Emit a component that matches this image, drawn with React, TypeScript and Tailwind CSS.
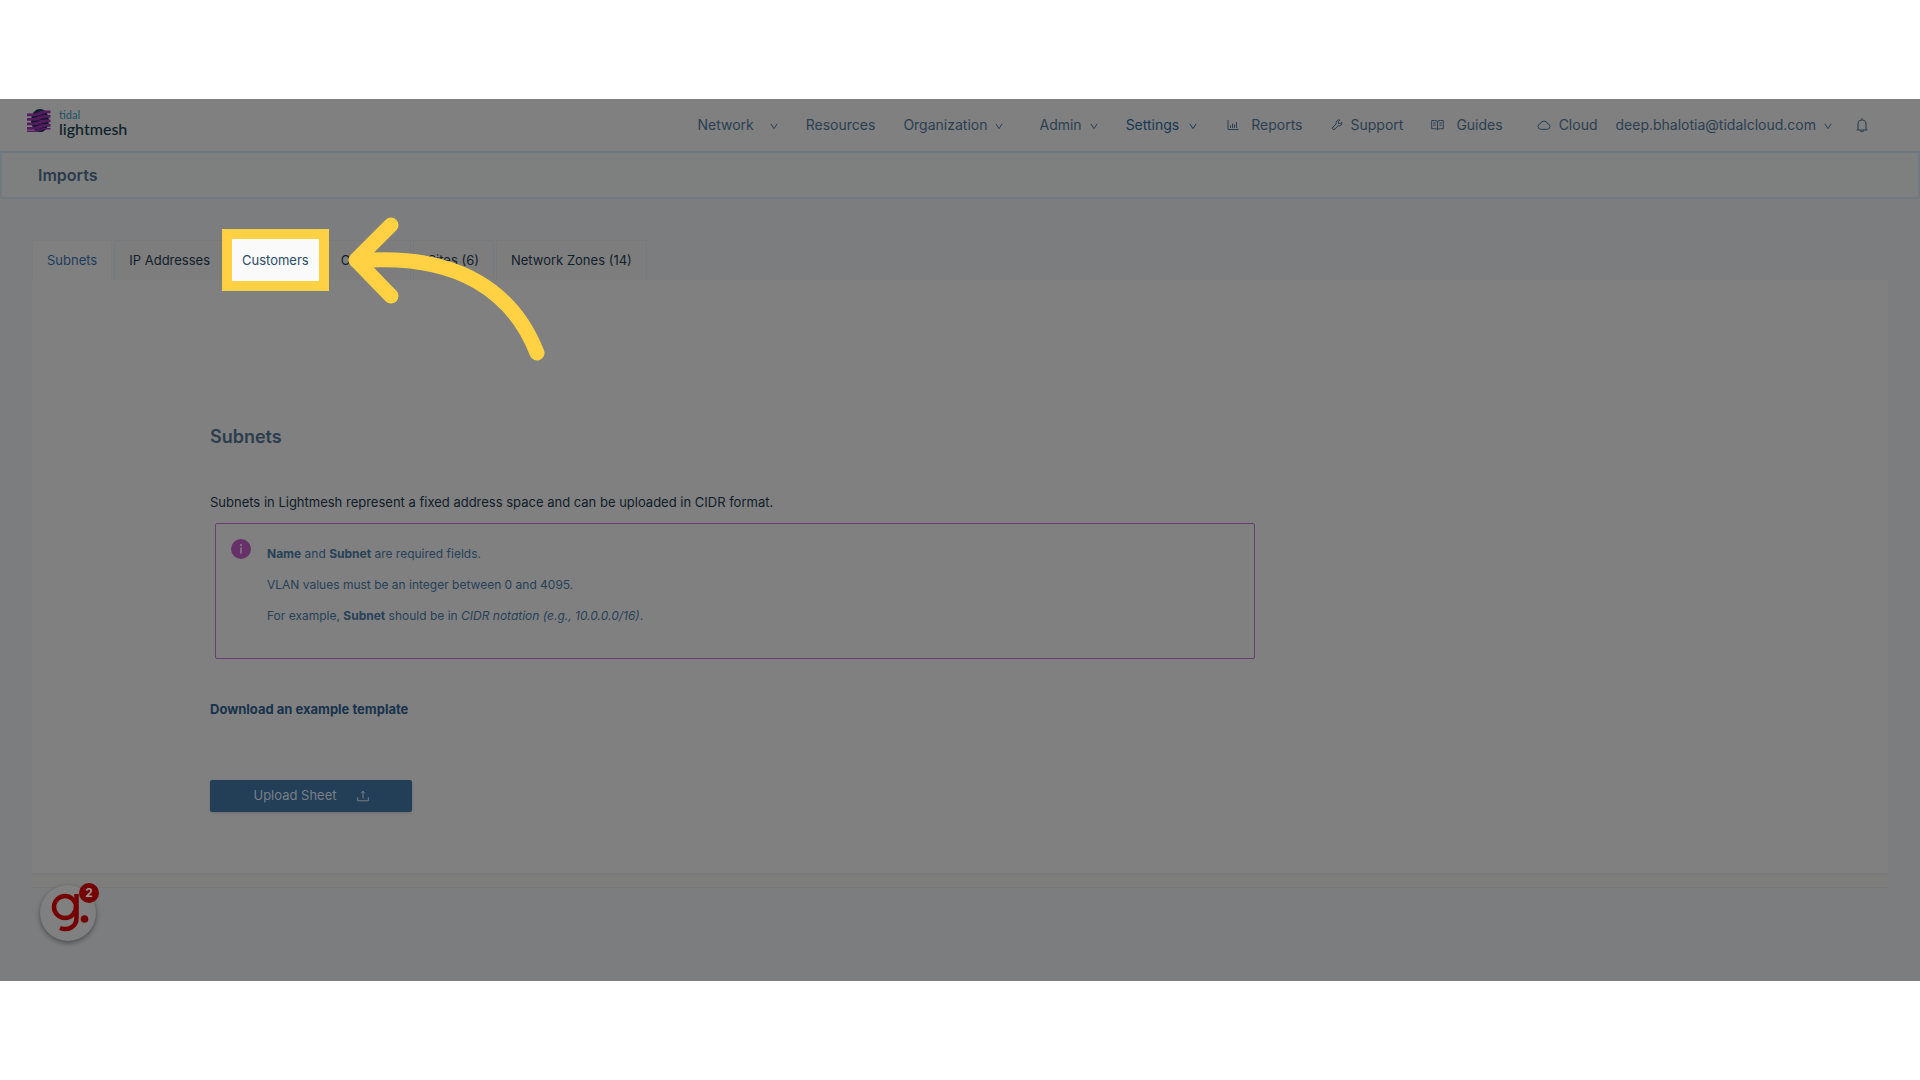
import type { ReactNode } from 'react';
import clsx from 'clsx';

type NavItem = {
  label: string;
  className: string;
  icon?: ReactNode;
  menu?: boolean;
};

const Chevron = () => (
  <svg className="w-2 h-2 shrink-0 mt-[2px]" viewBox="0 0 8 8" fill="none" stroke="currentColor" strokeWidth="1">
    <path d="M0.8 1.8 4 6.6 7.2 1.8" />
  </svg>
);

const ChartIcon = () => (
  <svg className="w-3 h-3 shrink-0" viewBox="0 0 12 12" fill="none" stroke="currentColor" strokeWidth="1">
    <path d="M1 1v9.5h10.5" />
    <path d="M3.5 6.5V9M5.5 4.5V9M7.5 5.5V9M9.5 3V9" />
  </svg>
);

const WrenchIcon = () => (
  <svg className="w-3 h-3 shrink-0" viewBox="0 0 12 12" fill="none" stroke="currentColor" strokeWidth="1" strokeLinejoin="round">
    <path d="M8.9 1.1a2.9 2.9 0 0 0-3.7 3.7L1 9.1 2.9 11l4.2-4.2a2.9 2.9 0 0 0 3.7-3.7L9.2 4.7 7.5 4.5 7.3 2.8z" />
    <path d="M2.7 8.6l.8.8" />
  </svg>
);

const BookIcon = () => (
  <svg className="w-[13px] h-3 shrink-0" viewBox="0 0 13 12" fill="none" stroke="currentColor" strokeWidth="1">
    <path d="M6.5 2.3C5.6 1.7 4.6 1.5 3.4 1.5H.7v8.2h3c1.2 0 2 .2 2.8.8.8-.6 1.6-.8 2.8-.8h3V1.5H9.6c-1.2 0-2.2.2-3.1.8zM6.5 2.3v8.2" />
    <path d="M2.2 4h2.5M2.2 6.2h2.5M8.3 4h2.5M8.3 6.2h2.5" />
  </svg>
);

const CloudIcon = () => (
  <svg className="w-3.5 h-3 shrink-0" viewBox="0 0 14 12" fill="none" stroke="currentColor" strokeWidth="1">
    <path d="M3.5 10.3a2.8 2.8 0 0 1-.3-5.5 4 4 0 0 1 7.6 0 2.8 2.8 0 0 1-.3 5.5z" />
  </svg>
);

const BellIcon = () => (
  <svg className="w-3 h-[15px]" viewBox="0 0 12 15" fill="none" stroke="currentColor" strokeWidth="1.1">
    <path d="M0.5 12h11M2 12V6a4 4 0 0 1 8 0v6M6 2V.3M4.5 12.2a1.5 1.5 0 0 0 3 0" />
  </svg>
);

const UploadIcon = () => (
  <svg className="w-3 h-3" viewBox="0 0 12 12" fill="none" stroke="currentColor" strokeWidth="1">
    <path d="M.7 7.2v3.6h10.6V7.2M6 8.4V1.4M4.2 3.2 6 1.2l1.8 2" />
  </svg>
);

const navItems: NavItem[] = [
  { label: 'Network', className: 'gap-4', menu: true },
  { label: 'Resources', className: 'ml-7' },
  { label: 'Organization', className: 'ml-7 gap-2', menu: true },
  { label: 'Admin', className: 'ml-9 gap-2', menu: true },
  { label: 'Settings', className: 'ml-7 gap-[10px] text-[#173753]', menu: true },
  { label: 'Reports', className: 'ml-[30px] gap-3', icon: <ChartIcon /> },
  { label: 'Support', className: 'ml-7 gap-2', icon: <WrenchIcon /> },
  { label: 'Guides', className: 'ml-7 gap-3', icon: <BookIcon /> },
  { label: 'Cloud', className: 'ml-[34px] gap-2', icon: <CloudIcon /> },
  { label: 'deep.bhalotia@tidalcloud.com', className: 'ml-[18px] gap-2', menu: true },
];

const tabs = ['Subnets', 'IP Addresses', 'Customers', 'Contacts', 'Sites (6)', 'Network Zones (14)'];

function Logo() {
  return (
    <a href="#" className="flex items-start gap-2">
      <svg className="w-6 h-6" viewBox="0 0 24 24">
        <ellipse cx="13" cy="11.500" rx="9" ry="11.500" fill="#0b1c2b" />
        <g fill="#561a60">
          <path d="M0 4.500H6C11 4.500 12 1.500 17 1.500H23.500V4.200H19C14 4.200 13 7.200 8 7.200H0z" />
          <path d="M0 9H6C11 9 12 6 17 6H23.500V8.700H19C14 8.700 13 11.700 8 11.700H0z" />
          <path d="M0 13.500H6C11 13.500 12 10.500 17 10.500H23.500V13.200H19C14 13.200 13 16.200 8 16.200H0z" />
          <path d="M0 18H6C11 18 12 15 17 15H23.500V17.700H19C14 17.700 13 20.700 8 20.700H0z" />
          <path d="M0 21.500H6C11 21.500 13 19 18 19H23.500V20.500H19C14 20.500 12 23 8 23H0z" />
        </g>
      </svg>
      <span className="flex flex-col font-['Lato',sans-serif]">
        <span className="text-[11px] leading-3 text-[#1b5165]">tidal</span>
        <span className="text-base leading-4 font-medium text-[#0b2028]">lightmesh</span>
      </span>
    </a>
  );
}

function Header() {
  return (
    <header className="flex items-start justify-between h-[52px] pt-[10px] pl-[27px] pr-[52px]">
      <Logo />
      <nav className="flex items-center pt-[6px] text-sm leading-5 text-[#2b3f52]">
        {navItems.map((item) => (
          <a key={item.label} href="#" className={clsx('flex items-center', item.className)}>
            {item.icon}
            {item.label}
            {item.menu && <Chevron />}
          </a>
        ))}
        <button aria-label="Notifications" className="ml-6">
          <BellIcon />
        </button>
      </nav>
    </header>
  );
}

// Yellow frame and arrow pointing at the highlighted tab
function Highlight() {
  return (
    <>
      <span className="absolute z-10 -top-3 -bottom-[11px] -inset-x-[6px] border-10 border-[#ffd143] pointer-events-none" />
      <svg
        className="absolute z-10 left-[115px] -top-[29px] w-[208px] h-[152px] pointer-events-none"
        viewBox="0 0 208 152"
        fill="none"
        stroke="#ffd143"
        strokeWidth="15"
        strokeLinecap="round"
        strokeLinejoin="round"
      >
        <path d="M194 141C171 82 117 40 14 49" />
        <path d="M48 13 13 48 48 84" />
      </svg>
    </>
  );
}

function Tabs() {
  return (
    <div role="tablist" className="flex gap-[2px] text-[13px] leading-5">
      {tabs.map((tab) => (
        <button
          key={tab}
          role="tab"
          aria-selected={tab === 'Subnets'}
          className={clsx(
            'relative h-10 px-[14px] pb-[2px] border border-b-0',
            tab === 'Subnets' && 'bg-[#808080] border-[#7a7c7e] text-[#1c3d5c]',
            tab === 'Customers' && 'bg-[#fafafa] border-[#fafafa] text-[#2b4a66] ring-2 ring-[#fafafa]',
            tab !== 'Subnets' && tab !== 'Customers' && 'bg-[#7d7d7d] border-[#77797b] text-[#111e2b]'
          )}
        >
          {tab}
          {tab === 'Customers' && <Highlight />}
        </button>
      ))}
    </div>
  );
}

function InfoBox() {
  return (
    <div className="flex items-start gap-4 ml-[5px] mt-[11px] w-[1040px] h-[136px] max-w-full border border-[#684070] rounded-xs pl-[15px] pt-[15px]">
      <svg className="w-5 h-5 shrink-0" viewBox="0 0 20 20">
        <circle cx="10" cy="10" r="10" fill="#663169" />
        <path d="M10 8.500v6" stroke="#908591" strokeWidth="1.400" />
        <circle cx="10" cy="6" r="1" fill="#908591" />
      </svg>
      <div className="flex flex-col gap-[11px] pt-[5px] text-xs leading-5 text-[#264158]">
        <p><strong>Name</strong> and <strong>Subnet</strong> are required fields.</p>
        <p>VLAN values must be an integer between 0 and 4095.</p>
        <p>For example, <strong>Subnet</strong> should be in <em>CIDR notation (e.g., 10.0.0.0/16)</em>.</p>
      </div>
    </div>
  );
}

function ChatLauncher() {
  return (
    <button aria-label="Open guide, 2 new" className="absolute left-10 bottom-10 w-14 h-14 rounded-full bg-[#808080] shadow-[0_2px_5px_rgba(0,0,0,0.4)]">
      <svg className="w-14 h-14" viewBox="0 0 56 56" fill="none" stroke="#740000" strokeWidth="4.500">
        <circle cx="25" cy="22" r="11" />
        <path d="M36.500 9v24c0 9-8.500 13-16.500 10" />
        <circle cx="44.500" cy="34" r="3.800" fill="#740000" stroke="none" />
      </svg>
      <span className="absolute -top-[2px] -right-[3px] w-5 h-5 rounded-full bg-[#740000] text-[#999999] text-xs leading-5 font-bold text-center">
        2
      </span>
    </button>
  );
}

export default function App() {
  return (
    <div className="min-h-screen bg-white py-[99px] font-['Inter',sans-serif]">
      <div className="relative bg-[#7c7d7f]">
        <div className="bg-[#808080]">
          <Header />
        </div>
        <div className="h-12 border-2 border-[#707880] bg-[#7e807f] px-9 flex items-center">
          <h1 className="text-base font-semibold text-[#2b3b4c]">Imports</h1>
        </div>

        <main className="px-8 pt-[41px] pb-[93px]">
          <Tabs />
          <section className="bg-[#808080] border-b-2 border-[#79797a] pl-[178px] pt-[143px] pb-[61px]">
            <h2 className="text-lg leading-7 font-semibold text-[#2b3d4e]">Subnets</h2>
            <p className="mt-[41px] text-[13px] leading-5 text-[#101d29]">
              Subnets in Lightmesh represent a fixed address space and can be uploaded in CIDR format.
            </p>
            <InfoBox />
            <a href="#" className="block w-fit mt-10 text-[13px] leading-5 font-bold text-[#17334c]">
              Download an example template
            </a>
            <button className="flex items-center justify-center gap-5 mt-[61px] w-[202px] h-8 rounded-xs bg-[#233e57] text-[13px] text-[#798087] shadow-sm">
              Upload Sheet
              <UploadIcon />
            </button>
          </section>
          <div className="h-[13px] bg-[#7d7d7c] border-b border-[#777777]" />
        </main>

        <ChatLauncher />
      </div>
    </div>
  );
}
